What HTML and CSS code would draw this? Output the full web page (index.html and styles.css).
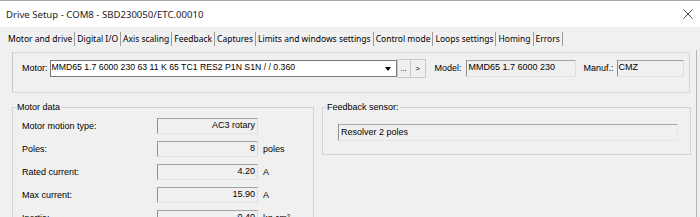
FILE: index.html
```html
<!DOCTYPE html>
<html>
<head>
<meta charset="utf-8">
<link rel="stylesheet" href="styles.css">
</head>
<body>
<div class="window">
  <div class="titlebar">
    <span class="title">Drive Setup - COM8 - SBD230050/ETC.00010</span>
    <svg class="close" width="10" height="10" viewBox="0 0 10 10"><path d="M0.5 0.5 L9.5 9.5 M9.5 0.5 L0.5 9.5" stroke="#444" stroke-width="1" fill="none"/></svg>
  </div>
  <div class="tabs">
    <span class="tab active">Motor and drive</span>
    <span class="tab">Digital I/O</span>
    <span class="tab">Axis scaling</span>
    <span class="tab">Feedback</span>
    <span class="tab">Captures</span>
    <span class="tab">Limits and windows settings</span>
    <span class="tab">Control mode</span>
    <span class="tab">Loops settings</span>
    <span class="tab">Homing</span>
    <span class="tab">Errors</span>
  </div>
  <div class="panel">
    <div class="motorbox">
      <span class="lbl">Motor:</span>
      <div class="combo"><span class="combo-text">MMD65 1.7 6000 230 63 11 K 65 TC1 RES2 P1N S1N / / 0.360</span><span class="arrow"></span></div>
      <span class="btn dots">...</span>
      <span class="btn next">&gt;</span>
      <span class="lbl model-lbl">Model:</span>
      <div class="rofield model">MMD65 1.7 6000 230</div>
      <span class="lbl manuf-lbl">Manuf.:</span>
      <div class="rofield manuf">CMZ</div>
    </div>
    <div class="groups">
      <fieldset class="group motordata">
        <legend>Motor data</legend>
        <div class="row"><span class="rlbl">Motor motion type:</span><div class="rofield val">AC3 rotary</div></div>
        <div class="row"><span class="rlbl">Poles:</span><div class="rofield val">8</div><span class="unit">poles</span></div>
        <div class="row"><span class="rlbl">Rated current:</span><div class="rofield val">4.20</div><span class="unit">A</span></div>
        <div class="row"><span class="rlbl">Max current:</span><div class="rofield val">15.90</div><span class="unit">A</span></div>
        <div class="row"><span class="rlbl">Inertia:</span><div class="rofield val">0.40</div><span class="unit">kg.cm²</span></div>
      </fieldset>
      <fieldset class="group feedback">
        <legend>Feedback sensor:</legend>
        <div class="rofield sensor">Resolver 2 poles</div>
      </fieldset>
    </div>
  </div>
</div>
</body>
</html>
```
FILE: styles.css
```css
* { box-sizing: border-box; }
html, body { margin: 0; padding: 0; }
body {
  background: #f0f0f0;
  font-family: "Liberation Sans", Arial, sans-serif;
  font-size: 9px;
  color: #000;
}
.window {
  width: 700px;
  height: 217px;
  overflow: hidden;
  background: #f0f0f0;
}
.titlebar {
  height: 27px;
  background: #fff;
  border-top: 1px solid #a8a8a8;
  display: flex;
  align-items: center;
  padding-left: 6px;
  padding-right: 7px;
}
.title {
  font-family: "Noto Sans", "Open Sans", sans-serif;
  font-size: 9.6px;
  color: #222;
  flex: 1;
}
.close { display: block; }
.tabs {
  height: 23px;
  display: flex;
  align-items: center;
  padding-left: 6px;
  font-family: "Noto Sans", "Open Sans", sans-serif;
  font-size: 8.5px;
}
.tab {
  padding: 0 2px;
  line-height: 14px;
  border-right: 1px solid #9a9a9a;
}
.panel {
  margin-left: 12px;
  width: 685px;
  height: 167px;
  border-right: 1px solid #b4b4b4;
  padding-top: 2px;
}
.motorbox {
  width: 678px;
  height: 41px;
  border: 1px solid #d6d6d6;
  border-left-color: #c8c8c8;
  display: flex;
  align-items: flex-start;
  padding: 7px 0 0 9px;
}
.lbl { line-height: 17px; }
.combo {
  margin-left: 2px;
  width: 347px;
  height: 17px;
  background: #fff;
  border: 1px solid #7a7a7a;
  display: flex;
  align-items: center;
  padding-left: 1px;
}
.combo-text { flex: 1; line-height: 13px; margin-top: -2px; font-size: 8.7px; }
.arrow {
  width: 0; height: 0;
  border-left: 3.5px solid transparent;
  border-right: 3.5px solid transparent;
  border-top: 4px solid #000;
  margin-right: 5px;
}
.btn {
  height: 19px;
  margin-top: -1px;
  background: #f0f0f0;
  border: 1px solid #c9c9c9;
  text-align: center;
  line-height: 17px;
  font-size: 8px;
}
.dots { width: 14px; }
.next { width: 16px; margin-left: -1px; }
.model-lbl { margin-left: 9px; }
.manuf-lbl { margin-left: 8px; }
.rofield {
  background: #f0f0f0;
  border: 1px solid;
  border-color: #a2a2a2 #dcdcdc #e4e4e4 #8f8f8f;
  white-space: nowrap;
  overflow: hidden;
}
.model { margin-left: 4px; width: 110px; height: 17px; line-height: 13px; padding-left: 2px; }
.manuf { margin-left: 3px; width: 67px; height: 17px; line-height: 13px; padding-left: 1px; }
.groups {
  display: flex;
  align-items: flex-start;
  margin-top: 9px;
}
.group {
  margin: 0;
  padding: 0;
  border: 1px solid #d3d3d3;
  min-width: 0;
}
.group legend {
  padding: 0 1px;
  line-height: 11px;
}
.motordata {
  width: 302px;
  height: 140px;
  padding: 1px 0 0 9px;
}
.motordata legend { margin-left: -6px; }
.row {
  display: flex;
  align-items: center;
  height: 23px;
}
.rlbl { width: 135px; }
.val {
  width: 101px;
  height: 16px;
  text-align: right;
  line-height: 12px;
  padding-right: 2px;
}
.unit { margin-left: 5px; }
.feedback {
  margin-left: 8px;
  width: 369px;
  height: 53px;
  padding: 11px 0 0 15px;
}
.feedback legend { margin-left: -12px; }
.sensor {
  width: 340px;
  height: 17px;
  line-height: 15px;
  padding-left: 2px;
  border-color: #a8a8a8 #e6e6e6 #e6e6e6 #8f8f8f;
}
```
